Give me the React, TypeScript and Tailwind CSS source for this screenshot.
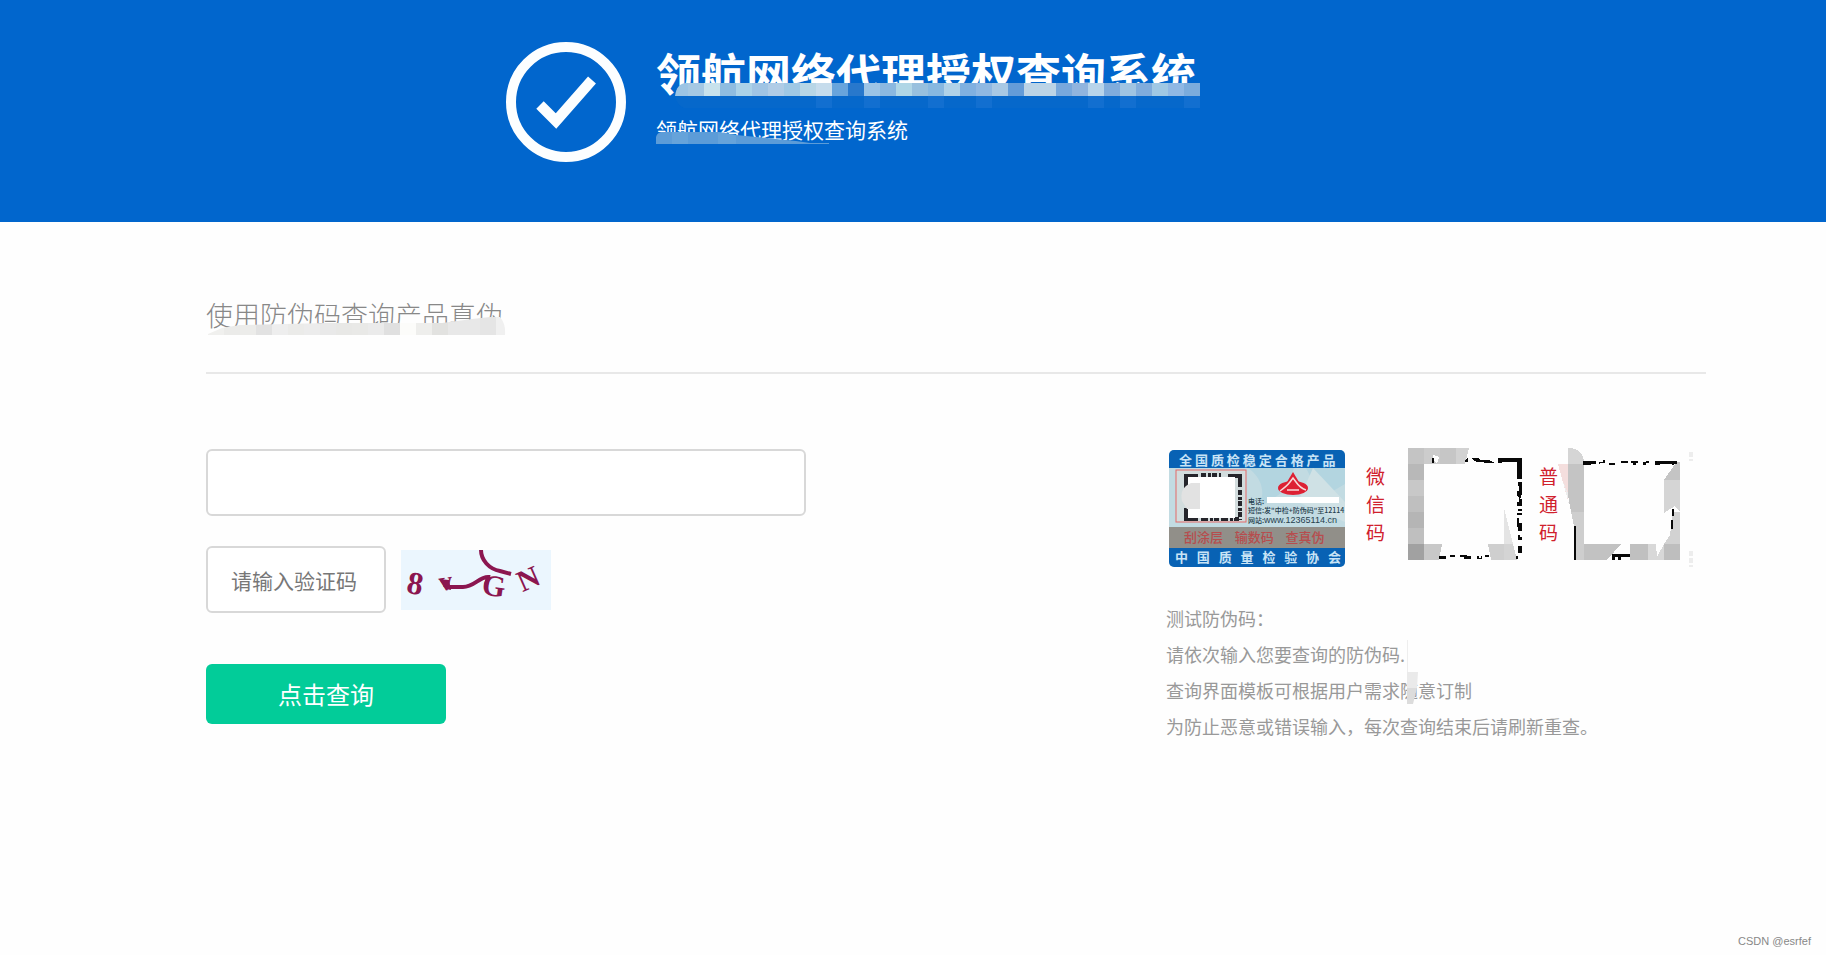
import React from "react";

const titleTiles = [
  "#9cc4e4", "#a5c8e3", "#c8e2ec", "#8fbce0", "#abd2e8", "#a0c4e4", "#b0cce6", "#a0c8e4", "#b8d6e6",
  "#c6dcec", "#68a4dc", "#2878cc", "#9cc4e6", "#8ab8e0", "#b0d6e6", "#98c0de", "#88b8e0", "#b0d2e8",
  "#80b0e0", "#90b8e2", "#a8c8e4", "#649cd8", "#bcd4e6", "#bcd4e6", "#78a8dc", "#90b4de", "#b8d4ea",
  "#80acdc", "#a0c4e2", "#80acdc", "#a0c8e4", "#90b8e4", "#7cacdc",
];
const brightTiles = [9, 12, 16, 19, 26, 28, 32];

const headingTiles = [
  "#f0f0ee", "#ebebe9", "#ececea", "#e2e2e2", "#eeeeee", "#ebebe9", "#ececec", "#e9e9e9", "#e8e8e6",
  "#e9e9e7", "#ebebeb", "#e0e0e0", "#fcfcfa", "#eeeeec", "#e2e2e0", "#e8e8e8", "#e8e8e8", "#e5e5e5", "#f0f0f0",
];

function CheckLogo() {
  return (
    <svg width="120" height="120" viewBox="0 0 120 120" fill="none" stroke="#fcfeff" className="shrink-0">
      <circle cx="60" cy="60" r="55" strokeWidth="10" />
      <path d="M34 45 50 61 86 20" transform="translate(0 18)" strokeWidth="10.5" />
    </svg>
  );
}

function TitleMosaic() {
  return (
    <svg className="absolute left-4 top-10" width="528" height="25" viewBox="0 0 528 25" shapeRendering="crispEdges" aria-hidden="true">
      <clipPath id="title-clip">
        <path d="M3 13C4 5 8 0 14 0H528V25H12C7 23 4 18 3 13Z" />
      </clipPath>
      <g clipPath="url(#title-clip)">
        {titleTiles.map((color, i) => (
          <g key={i}>
            <rect x={i * 16} y="0" width="16" height="13" fill={color} />
            <rect x={i * 16} y="13" width="16" height="12" fill={brightTiles.includes(i) ? "#126fd0" : "#0668cb"} />
          </g>
        ))}
      </g>
    </svg>
  );
}

function SubtitleMosaic() {
  return (
    <svg className="absolute left-0 top-[18px]" width="174" height="12" viewBox="0 0 174 12" aria-hidden="true">
      <path d="M0 12V5Q1 1 5 0H62L80 3 110 6 140 9 154 11 173 11V12Z" fill="#5c9cd8" />
      <path d="M16 0H32V12H16ZM62 0 80 3V12H62Z" fill="#66a3da" />
    </svg>
  );
}

function HeadingMosaic() {
  return (
    <svg className="absolute left-0 top-5" width="300" height="18" viewBox="0 0 300 18" aria-hidden="true">
      <clipPath id="heading-clip">
        <path d="M2 17 16 11 34 8 120 6H236L266 2 284 0H294Q300 7 299 18H2Z" />
      </clipPath>
      <g clipPath="url(#heading-clip)" shapeRendering="crispEdges">
        {headingTiles.map((color, i) => (
          <rect key={i} x={i * 16 + 2} y="0" width="16" height="18" fill={color} />
        ))}
      </g>
    </svg>
  );
}

function Captcha() {
  return (
    <svg width="150" height="60" viewBox="0 0 150 60" role="img" aria-label="验证码" className="bg-[#ebf6fe]">
      <g fill="#8b1650" fontFamily="'Liberation Serif', serif" fontWeight="700">
        <text x="6" y="44" fontSize="32" transform="rotate(10 14 34)">8</text>
        <text x="38" y="40" fontSize="27" transform="rotate(-8 46 34)">v</text>
        <text x="81" y="46" fontSize="30" transform="rotate(8 93 38)">G</text>
        <text x="117" y="39" fontSize="30" transform="rotate(-24 127 30)">N</text>
      </g>
      <g fill="none" stroke="#8b1650" strokeWidth="4">
        <path d="M80 0C80 10 88 19 99 21L110 24" />
        <path d="M43 35 48 37H62C73 37 78 27 87 27L85 35" />
      </g>
      <path d="M38 29 48 30 50 40 45 39Z" fill="#8b1650" />
    </svg>
  );
}

function Sticker() {
  return (
    <svg width="180" height="120" viewBox="0 0 180 120" className="shrink-0" fontFamily="'Noto Sans CJK SC', sans-serif">
      <clipPath id="sticker-clip">
        <rect x="3" y="2" width="176" height="117" rx="5" />
      </clipPath>
      <g clipPath="url(#sticker-clip)">
        <rect x="3" y="2" width="176" height="117" fill="#c2dbe2" />
        <path d="M82 20Q102 34 94 59L120 42 128 20ZM140 20 155 50 179 36V20Z" fill="#b3d5e0" />
        <path d="M147 20 179 54V74L132 54Z" fill="#cfe1e5" />
        <rect x="3" y="2" width="176" height="18" fill="#0862b4" />
        <rect x="3" y="79" width="176" height="21" fill="#918f89" />
        <rect x="3" y="100" width="176" height="19" fill="#0862b4" />
      </g>
      <text x="13" y="17" fontSize="13" fontWeight="700" fill="#c8e4f6">全 国 质 检 稳 定 合 格 产 品</text>
      <rect x="10" y="22" width="70" height="52" fill="#d2dcdd" stroke="#e46a68" />
      <g fill="none" stroke="#25252b" strokeWidth="4">
        <path d="M20 40V28H32M62 28H74V39M20 60V71H32" />
        <path d="M35 27H55M74 42V72" strokeDasharray="5 2 3 1" />
        <path d="M35 71H73" strokeDasharray="7 2 3 1 5 2" />
      </g>
      <path d="M22 29H69V70H22Z" fill="#fff" />
      <path d="M34 35H25Q13 40 16 53L21 61H34Z" fill="#e2e2e2" />
      <ellipse cx="127" cy="40" rx="15" ry="7" fill="#dd2033" />
      <path d="M127 24 136 39H118Z" fill="#dd2033" />
      <path d="M114 43Q121 38 124 34L127 30 130 34Q134 40 140 42M121 42H133" fill="none" stroke="#f7d8d9" strokeWidth="1.5" />
      <g fontSize="7" fontWeight="500" fill="#26404e">
        <text x="82" y="56">电话:</text>
        <text x="82" y="65">短信:发"中检+防伪码"至12114</text>
        <text x="82" y="75">网站:<tspan fontSize="9" fontFamily="'Liberation Sans', sans-serif">www.12365114.cn</tspan></text>
      </g>
      <rect x="101" y="49" width="72" height="6" fill="#fff" />
      <text x="18" y="94" fontSize="13" fontWeight="500" fill="#b64d4e" className="whitespace-pre">刮涂层    输数码    查真伪</text>
      <text x="9" y="114" fontSize="13" fontWeight="700" fill="#c8e4f6" className="whitespace-pre">中   国   质   量   检   验   协   会</text>
    </svg>
  );
}

function WechatCode() {
  return (
    <svg width="118" height="112" viewBox="0 0 118 112" className="shrink-0" shapeRendering="crispEdges" aria-hidden="true">
      <path d="M0 0H16V16H0Z" fill="#c4c4c4" />
      <path d="M16 0H32V16H16Z" fill="#cccccc" />
      <path d="M32 0H48V16H32Z" fill="#c6c6c6" />
      <path d="M48 0H61L57 16H48Z" fill="#d2d2d2" />
      {["#b8b8b8", "#c8c8c8", "#bfbfbf", "#b5b5b5", "#bfbfbf", "#a1a1a1"].map((color, i) => (
        <rect key={i} x="0" y={16 + i * 16} width="16" height="16" fill={color} />
      ))}
      <path d="M16 96H34L31 112H16Z" fill="#c8c8c8" />
      <path d="M80 96H96V112H83Z" fill="#cfcfcf" />
      <path d="M96 60 109 112H96Z" fill="#e4e4e4" />
      <path d="M96 96H105L109 112H96Z" fill="#d4d4d4" />
      <path d="M25 7 31 9 29 16 26 12Z" fill="#fff" />
      <g fill="#080808">
        <path d="M24 10H26V15H24ZM57 12 60 10V14H57ZM64 10H70L73 12H81L87 15H77L74 14H69L66 13ZM90 10H114V31H109V14H94V15H90Z" />
        <path d="M110 34H114V46L112 51H114V58H109V54H111V50L109 47V43H111V38H110ZM110 61H114V63H110ZM109 65H114V67H109ZM109 70H111V75H114V83H110V79H109ZM110 87H112V89H114V92H110ZM110 98H114V105H110ZM108 108H110V111H108Z" />
        <path d="M31 108H38V111H31ZM42 107H47V109H42ZM52 107H59V108H63V111H56V109H52ZM69 108H71V110H73V108H74V111H69ZM77 107H81V109H77Z" />
      </g>
    </svg>
  );
}

function NormalCode() {
  return (
    <svg width="136" height="120" viewBox="0 0 136 120" className="shrink-0" shapeRendering="crispEdges" aria-hidden="true">
      <path d="M0 16H10V53Z" fill="#f4dedd" />
      <path d="M5 34 10 45V53L13 63Z" fill="#ececec" />
      <path d="M10 0Q24 0 26 13V16H10Z" fill="#d5d5d5" />
      <path d="M10 16H26V64H13L10 47Z" fill="#c4c4c4" />
      <path d="M13 64H26V112H16V78Z" fill="#cecece" />
      <path d="M26 96H63L49 112H26Z" fill="#c2c2c2" />
      <path d="M72 96H90V112H72Z" fill="#c0c0c0" />
      <path d="M90 96H98L99 109 106 96V112H90Z" fill="#d8d8d8" />
      <path d="M106 96H122V112H106Z" fill="#bebebe" />
      <path d="M118 14H122V32H106L117 16Z" fill="#c4c4c4" />
      <path d="M106 32H122V64L117 58 106 65Z" fill="#d5d5d5" />
      <path d="M115 64H122V96H106L112 87Z" fill="#d2d2d2" />
      <g fill="#080808">
        <path d="M25 13H38V16H33V17H25ZM45 12H47V15H42V16H41V14H45ZM51 15H57V17H51ZM63 13H70V15H63ZM73 13H80V15H78V17H75V15H73ZM85 14H88V13H91V15H88V17H85ZM97 13H119V16H116V17H114V16H102V17H97Z" />
        <path d="M16 78H18V112H16ZM114 61H116V68H114ZM113 72H115V81H113ZM54 106H72V109H63V112H60V109H57V112H54Z" />
      </g>
      <path d="M133 4V13M133 103V119" stroke="#ededed" strokeWidth="4" strokeDasharray="5 2" />
    </svg>
  );
}

export default function App() {
  return (
    <div className="flex min-h-screen flex-col bg-[#fefefe] font-['Noto_Sans_CJK_SC',sans-serif]">
      <header className="flex gap-[30px] bg-[#0166cd] pt-[42px] pb-[60px] pl-[506px] text-white">
        <CheckLogo />
        <div className="pt-px">
          <div className="relative">
            <h1 className="text-[45px] leading-[60px] font-bold">领航网络代理授权查询系统</h1>
            <TitleMosaic />
          </div>
          <div className="relative mt-[11px]">
            <p className="text-[21px] leading-[30px]">领航网络代理授权查询系统</p>
            <SubtitleMosaic />
          </div>
        </div>
      </header>

      <main className="pt-[75px] pr-[120px] pl-[206px]">
        <div className="relative border-b-2 border-[#e8e8e8] pb-[39px]">
          <h2 className="text-[27px] leading-9 font-light text-[#888888]">使用防伪码查询产品真伪</h2>
          <HeadingMosaic />
        </div>

        <div className="flex justify-between">
          <form className="w-[600px] pt-[75px]" onSubmit={(e) => e.preventDefault()}>
            <input
              type="text"
              aria-label="防伪码"
              className="block h-[67px] w-full rounded-md border-2 border-[#d8d8d8] bg-white px-6 text-[21px] outline-none"
            />
            <div className="mt-[30px] flex items-center gap-[15px]">
              <input
                type="text"
                aria-label="请输入验证码"
                placeholder="请输入验证码"
                className="h-[67px] w-[180px] rounded-md border-2 border-[#d8d8d8] bg-white px-[23px] text-[21px] outline-none placeholder:text-[#777777]"
              />
              <Captcha />
            </div>
            <button type="submit" className="mt-[51px] block h-[60px] w-[240px] rounded-md bg-[#02cc99] text-2xl text-white">
              点击查询
            </button>
          </form>

          <aside className="w-[540px] pt-[74px]">
            <div className="flex items-start">
              <Sticker />
              <p className="ml-5 mr-[23px] w-[19px] pt-[14px] text-[19px] leading-7 text-[#d0202c]">微信码</p>
              <WechatCode />
              <p className="ml-[13px] w-[19px] pt-[14px] text-[19px] leading-7 text-[#d0202c]">普通码</p>
              <NormalCode />
            </div>
            <div className="relative mt-8 text-lg leading-9 text-[#999999]">
              <p>测试防伪码：</p>
              <p>请依次输入您要查询的防伪码.</p>
              <p>查询界面模板可根据用户需求随意订制</p>
              <p>为防止恶意或错误输入，每次查询结束后请刷新重查。</p>
              <svg className="absolute left-60 top-10" width="12" height="64" viewBox="0 0 12 64" aria-hidden="true">
                <path d="M1 0H2V32H1Z" fill="#eeeeee" />
                <path d="M1 32H12L11 48H1Z" fill="#eaeaea" />
                <path d="M1 48H11L7 64H1Z" fill="#dcdcdc" />
              </svg>
            </div>
          </aside>
        </div>
      </main>

      <footer className="mt-auto pr-[15px] pb-[6px] text-right font-['Liberation_Sans',sans-serif] text-[11px] leading-4 text-[#888888]">
        CSDN @esrfef
      </footer>
    </div>
  );
}
